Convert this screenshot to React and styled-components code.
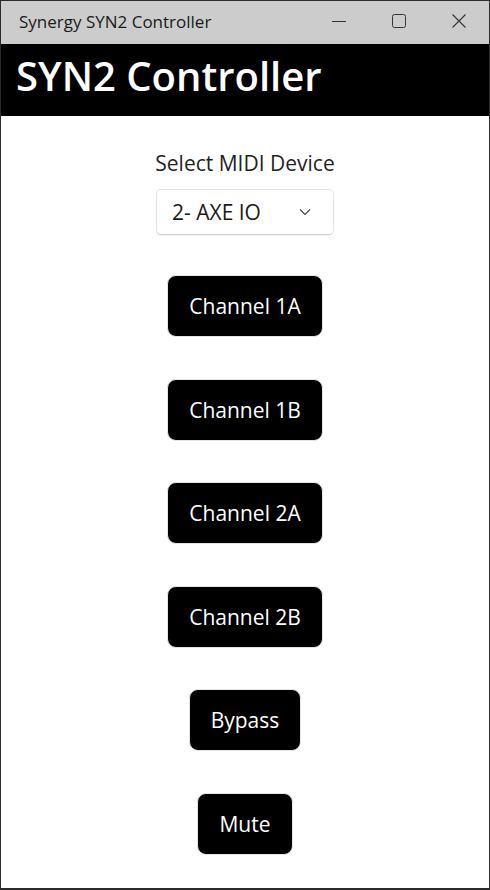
import React, { useState } from 'react';
import styled, { createGlobalStyle } from 'styled-components';

const GlobalStyle = createGlobalStyle`
  html, body {
    margin: 0;
    padding: 0;
    background: #ffffff;
  }
  body {
    font-family: "Open Sans", "Noto Sans", sans-serif;
  }
`;

const channels = ['Channel 1A', 'Channel 1B', 'Channel 2A', 'Channel 2B', 'Bypass', 'Mute'];

const App = () => {
  const [device] = useState('2- AXE IO');

  return (
    <>
      <GlobalStyle />
      <Window>
        <TitleBar>
          <TitleText>Synergy SYN2 Controller</TitleText>
          <Controls>
            <ControlButton aria-label="minimize">
              <svg width="16" height="16" viewBox="0 0 16 16">
                <line x1="1" y1="8.5" x2="15" y2="8.5" stroke="#333" strokeWidth="1" />
              </svg>
            </ControlButton>
            <ControlButton aria-label="maximize">
              <svg width="16" height="16" viewBox="0 0 16 16">
                <rect x="1.5" y="1.5" width="13" height="13" rx="2" fill="none" stroke="#333" strokeWidth="1" />
              </svg>
            </ControlButton>
            <ControlButton aria-label="close">
              <svg width="16" height="16" viewBox="0 0 16 16">
                <path d="M1.5 1.5 L14.5 14.5 M14.5 1.5 L1.5 14.5" stroke="#333" strokeWidth="1.1" fill="none" />
              </svg>
            </ControlButton>
          </Controls>
        </TitleBar>

        <Header>
          <HeaderTitle>SYN2 Controller</HeaderTitle>
        </Header>

        <Content>
          <Label>Select MIDI Device</Label>
          <DeviceSelect>
            <span>{device}</span>
            <svg width="12" height="8" viewBox="0 0 12 8">
              <path d="M1 1.5 L6 6.5 L11 1.5" stroke="#444" strokeWidth="1.1" fill="none" />
            </svg>
          </DeviceSelect>

          <ButtonList>
            {channels.map((name) => (
              <ChannelButton key={name}>{name}</ChannelButton>
            ))}
          </ButtonList>
        </Content>
      </Window>
    </>
  );
};

const Window = styled.div`
  width: 490px;
  height: 890px;
  box-sizing: border-box;
  border: 1px solid #2b2b2b;
  border-bottom-width: 2px;
  display: flex;
  flex-direction: column;
  background: #ffffff;
  overflow: hidden;
`;

const TitleBar = styled.div`
  height: 43px;
  flex-shrink: 0;
  background: #cccccc;
  display: flex;
  align-items: center;
  justify-content: space-between;
  padding-left: 18px;
`;

const TitleText = styled.div`
  font-family: "Open Sans", "Noto Sans", sans-serif;
  font-size: 17px;
  color: #1a1a1a;
  margin-top: -2px;
`;

const Controls = styled.div`
  display: flex;
  height: 100%;
`;

const ControlButton = styled.div`
  width: 60px;
  height: 100%;
  display: flex;
  align-items: center;
  justify-content: center;
  margin-top: -2px;

  svg {
    display: block;
  }
`;

const Header = styled.div`
  height: 72px;
  flex-shrink: 0;
  background: #000000;
  display: flex;
  align-items: flex-start;
  padding-left: 15px;
`;

const HeaderTitle = styled.h1`
  margin: 6px 0 0;
  font-family: "Open Sans", "Noto Sans", sans-serif;
  font-weight: 600;
  font-size: 40px;
  line-height: 52px;
  color: #ffffff;
`;

const Content = styled.div`
  display: flex;
  flex-direction: column;
  align-items: center;
  padding-top: 33px;
`;

const Label = styled.div`
  font-size: 21px;
  line-height: 28px;
  color: #1f1f1f;
`;

const DeviceSelect = styled.div`
  margin-top: 12px;
  width: 178px;
  height: 46px;
  box-sizing: border-box;
  border: 1px solid #e3e3e3;
  border-bottom-color: #cfcfcf;
  border-radius: 5px;
  box-shadow: 0 1px 1px rgba(0, 0, 0, 0.06);
  display: flex;
  align-items: center;
  justify-content: space-between;
  padding: 0 22px 0 15px;
  font-size: 21px;
  color: #1a1a1a;

  span {
    margin-top: -1px;
  }
`;

const ButtonList = styled.div`
  margin-top: 40px;
  display: flex;
  flex-direction: column;
  align-items: center;
  gap: 41.6px;
`;

const ChannelButton = styled.button`
  height: 62px;
  padding: 0 21px;
  background: #000000;
  color: #ffffff;
  border: 1px solid #e6e6e6;
  border-radius: 9px;
  font-family: "Open Sans", "Noto Sans", sans-serif;
  font-size: 21px;
  cursor: pointer;
`;

export default App;
